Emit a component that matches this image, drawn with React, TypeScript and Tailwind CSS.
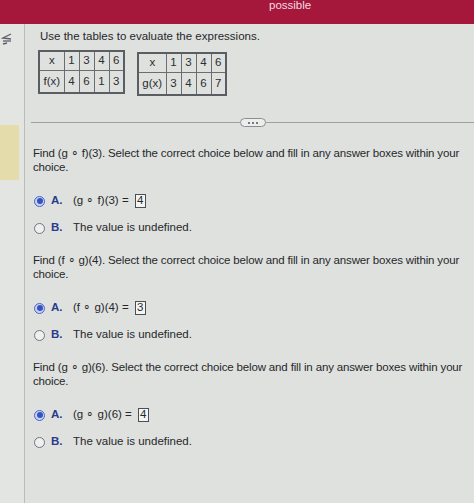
import React from "react";

function Radio({ checked }: { checked?: boolean }) {
  return checked ? (
    <span className="flex h-[11px] w-[11px] items-center justify-center rounded-full border border-[#4a63c4] bg-[#c9d3f0]">
      <span className="h-[6px] w-[6px] rounded-full bg-[#3552c2]" />
    </span>
  ) : (
    <span className="h-[11px] w-[11px] rounded-full border border-[#6f7580] bg-[#eef0ee]" />
  );
}

function Section({
  expr,
  value,
  gapTop,
}: {
  expr: string;
  value: string;
  gapTop: string;
}) {
  return (
    <div className={`flex flex-col ${gapTop}`}>
      <p className="text-[11.5px] leading-[14px] tracking-[-0.15px] text-[#26282b]">
        {`Find ${expr}. Select the correct choice below and fill in any answer boxes within your choice.`}
      </p>
      <div className="mt-[19px] flex items-center gap-[6px] pl-[1px] h-[16px]">
        <Radio checked />
        <span className="text-[11.5px] font-bold text-[#2a3a8c] w-[16px]">A.</span>
        <span className="text-[11.5px] text-[#26282b]">{`${expr} =`}</span>
        <span className="flex h-[14px] w-[11px] items-center justify-center border border-[#4a4f55] bg-[#f4f5f3] text-[11.5px] leading-none text-[#26282b]">
          {value}
        </span>
      </div>
      <div className="mt-[11px] flex items-center gap-[6px] pl-[1px] h-[16px]">
        <Radio />
        <span className="text-[11.5px] font-bold text-[#2a3a8c] w-[16px]">B.</span>
        <span className="text-[11.5px] text-[#26282b]">The value is undefined.</span>
      </div>
    </div>
  );
}

function FnTable({ name, vals, w0 }: { name: string; vals: string[]; w0: string }) {
  const xs = ["1", "3", "4", "6"];
  return (
    <table className="border-collapse border-2 border-[#5a5e63] text-[11.5px] text-[#2b2d30]">
      <tbody>
        <tr className="h-[18px]">
          <td className={`border border-[#6a6e73] text-center ${w0}`}>x</td>
          {xs.map((x) => (
            <td key={x} className="border border-[#6a6e73] text-center w-[15px]">
              {x}
            </td>
          ))}
        </tr>
        <tr className="h-[23px]">
          <td className="border border-[#6a6e73] text-center">{name}</td>
          {vals.map((v, i) => (
            <td key={i} className="border border-[#6a6e73] text-center">
              {v}
            </td>
          ))}
        </tr>
      </tbody>
    </table>
  );
}

export default function App() {
  return (
    <div
      className="relative h-[503px] w-[474px] overflow-hidden bg-[#dfe1de]"
      style={{ fontFamily: '"Liberation Sans", Arial, sans-serif' }}
    >
      <div className="relative h-[24px] bg-[#a6173c]">
        <span className="absolute left-[269px] top-[-3px] text-[11.5px] text-[#f3dbe2]">possible</span>
      </div>
      <div className="flex h-[479px]">
        <div className="flex w-[25px] flex-col border-r border-[#b9bcb8] bg-[#e3e5e2]">
          <div className="mt-[8px] ml-[1px] h-[14px] w-[12px] text-[#5b6068]">
            <svg viewBox="0 0 12 14" width="12" height="14" fill="none" stroke="currentColor" strokeWidth="1.3">
              <path d="M10 2 L2 6 L10 7" />
              <path d="M2 9 L10 9" />
              <path d="M2 12 L6 11" />
            </svg>
          </div>
          <div className="mt-[79px] h-[55px] w-[19px] bg-[#e4dcaa]" />
        </div>
        <div className="flex flex-1 flex-col">
          <div className="pl-[15px] pt-[4px] text-[11.5px] text-[#26282b]">
            Use the tables to evaluate the expressions.
          </div>
          <div className="mt-[5px] flex items-start gap-[12px] pl-[13px]">
            <FnTable name="f(x)" vals={["4", "6", "1", "3"]} w0="w-[25px]" />
            <div className="mt-[2px]">
              <FnTable name="g(x)" vals={["3", "4", "6", "7"]} w0="w-[28px]" />
            </div>
          </div>
          <div className="mt-[22px] flex items-center pl-[6px]">
            <div className="h-px flex-1 bg-[#9ea19d]" />
            <div className="flex h-[9px] w-[26px] items-center justify-center gap-[2px] rounded-full border border-[#8a8e94] bg-[#eceeeb]">
              <span className="h-[2px] w-[2px] rounded-full bg-[#555]" />
              <span className="h-[2px] w-[2px] rounded-full bg-[#555]" />
              <span className="h-[2px] w-[2px] rounded-full bg-[#555]" />
            </div>
            <div className="h-px flex-1 bg-[#9ea19d]" />
          </div>
          <div className="pl-[8px] pr-[4px]">
            <Section gapTop="mt-[19px]" expr="(g ∘ f)(3)" value="4" />
            <Section gapTop="mt-[17px]" expr="(f ∘ g)(4)" value="3" />
            <Section gapTop="mt-[17px]" expr="(g ∘ g)(6)" value="4" />
          </div>
        </div>
      </div>
    </div>
  );
}
